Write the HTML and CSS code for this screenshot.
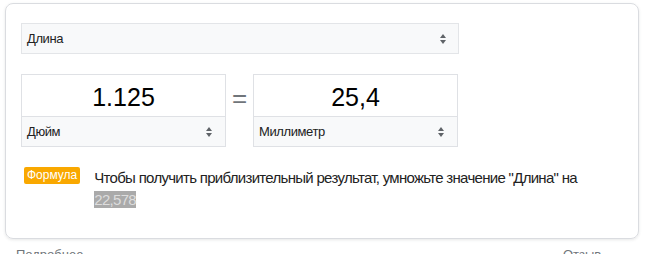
FILE: index.html
```html
<!DOCTYPE html>
<html lang="ru">
<head>
    <meta charset="UTF-8">
    <meta name="viewport" content="width=device-width, initial-scale=1.0">
    <title>Конвертер</title>
    <link rel="stylesheet" href="styles.css">
</head>
<body>
    <div class="card">
        <div class="sel sel-main">
            <span>Длина</span>
            <span class="arr"></span>
        </div>

        <div class="conv">
            <div class="box">
                <div class="num">1.125</div>
                <div class="sel sel-unit">
                    <span>Дюйм</span>
                    <span class="arr"></span>
                </div>
            </div>
            <div class="eq">=</div>
            <div class="box">
                <div class="num">25,4</div>
                <div class="sel sel-unit">
                    <span>Миллиметр</span>
                    <span class="arr"></span>
                </div>
            </div>
        </div>

        <div class="formula">
            <div class="badge">Формула</div>
            <p class="ftext">Чтобы получить приблизительный результат, умножьте значение "Длина" на <span class="hl">22,578</span></p>
        </div>
    </div>

    <div class="foot">
        <span class="more">Подробнее</span>
        <span>Отзыв</span>
    </div>
</body>
</html>
```

FILE: styles.css
```css
body {
    margin: 0;
    font-family: "Liberation Sans", Arial, sans-serif;
    color: #202124;
    background: #fff;
}

.card {
    margin: 3px 0 0 5px;
    width: 602px;
    height: 200px;
    padding: 19px 15px 15px 15px;
    border: 1px solid #dadce0;
    border-radius: 8px;
    box-shadow: 0 1px 3px rgba(60, 64, 67, 0.12);
}

.sel {
    display: flex;
    align-items: center;
    justify-content: space-between;
    background: #f8f9fa;
    font-size: 13px;
    letter-spacing: -0.4px;
    color: #222;
}

.sel-main {
    width: 420px;
    height: 29px;
    padding: 0 11px 0 5px;
    border: 1px solid #e3e5e8;
}

.arr {
    width: 7px;
    height: 10px;
    position: relative;
}

.arr::before,
.arr::after {
    content: "";
    position: absolute;
    left: 0;
    border: 3.5px solid transparent;
}

.arr::before {
    top: -3px;
    border-bottom: 4px solid #5f6368;
}

.arr::after {
    bottom: -3px;
    border-top: 4px solid #5f6368;
}

.conv {
    display: flex;
    align-items: flex-start;
    margin-top: 20px;
}

.box {
    width: 203px;
    border: 1px solid #dfe1e5;
}

.num {
    height: 41px;
    border-bottom: 1px solid #dfe1e5;
    text-align: center;
    font-size: 25px;
    line-height: 44px;
    color: #000;
}

.sel-unit {
    height: 29px;
    padding: 0 12px 0 5px;
}

.eq {
    width: 27px;
    text-align: center;
    font-size: 26px;
    color: #70757a;
    line-height: 26px;
    margin-top: 11px;
}

.formula {
    display: flex;
    align-items: flex-start;
    margin-top: 20px;
}

.badge {
    margin-left: 3px;
    padding: 0 3px;
    height: 17px;
    line-height: 17px;
    background: #f9a800;
    color: #fff;
    font-size: 12px;
    border-radius: 2px;
}

.ftext {
    margin: 0 0 0 14px;
    width: 520px;
    font-size: 15px;
    letter-spacing: -0.7px;
    line-height: 22px;
    color: #222;
}

.hl {
    background: #aaa;
    color: #ddd;
}

.foot {
    display: flex;
    margin: 8px 0 0 16px;
    font-size: 13px;
    color: #70757a;
}

.more {
    width: 547px;
}
```
